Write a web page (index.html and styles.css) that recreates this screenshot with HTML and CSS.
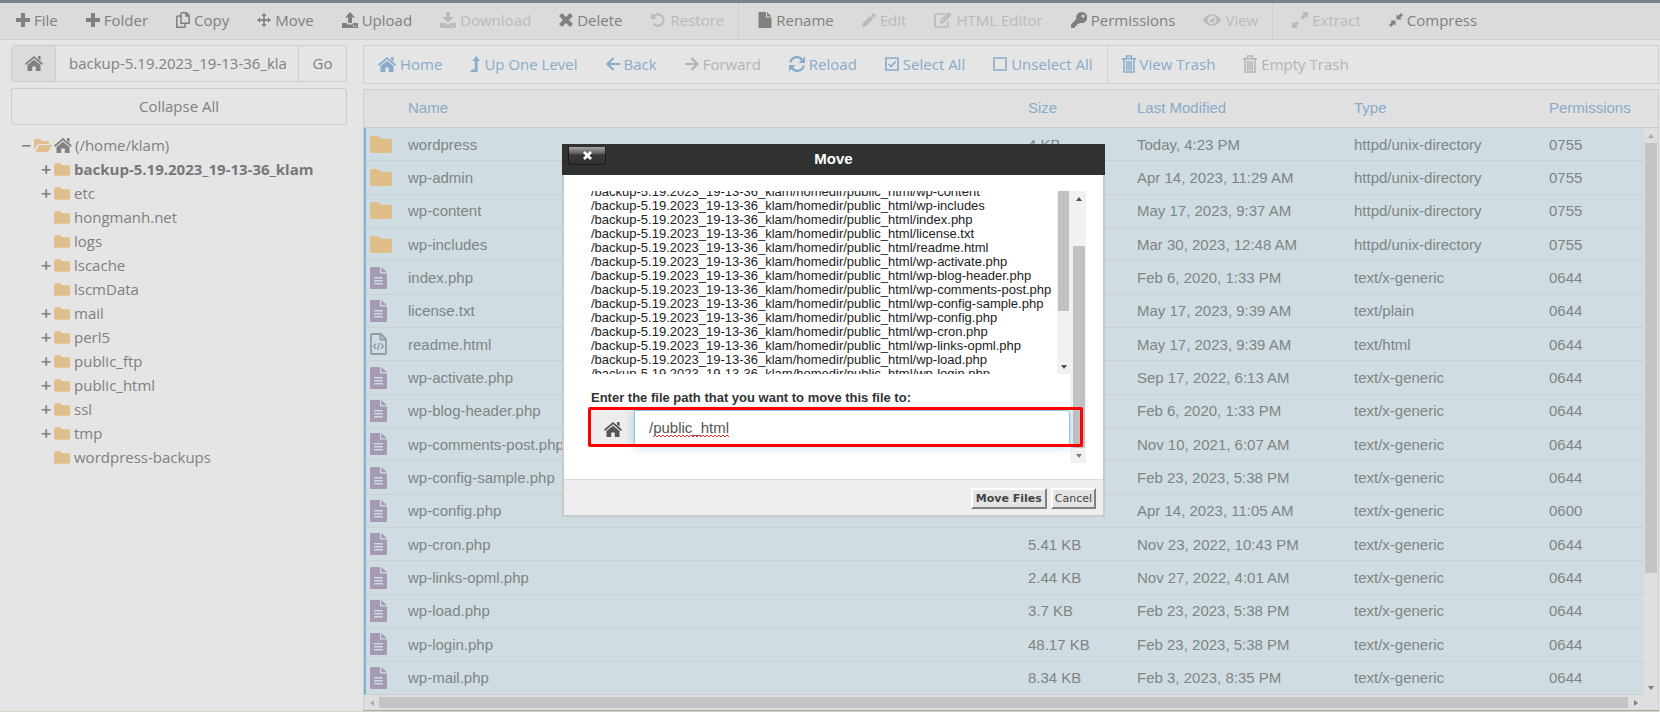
FILE: index.html
```html
<!DOCTYPE html>
<html lang="en">
<head>
    <meta charset="UTF-8">
    <meta name="viewport" content="width=device-width, initial-scale=1.0">
    <title>File Manager</title>
    <link rel="stylesheet" href="styles.css">
</head>
<body>

    <!-- icon set -->
    <svg class="icon-defs" aria-hidden="true">
        <symbol id="i-plus" viewBox="0 0 14 14"><path d="M5 0h4v5h5v4H9v5H5V9H0V5h5z"/></symbol>
        <symbol id="i-copy" viewBox="0 0 14 16"><path fill="none" stroke="currentColor" stroke-width="1.5" d="M6 .8h4.5l2.7 2.7v7.7H5V1.5zM10 1v3h3M5 4H1.5l-.7.7v10.5H9v-4"/></symbol>
        <symbol id="i-move" viewBox="0 0 16 16"><path d="M8 0l3 3.4H9V7h3.6V5L16 8l-3.4 3V9H9v3.6h2L8 16l-3-3.4h2V9H3.4v2L0 8l3.4-3v2H7V3.4H5z"/></symbol>
        <symbol id="i-upload" viewBox="0 0 16 16"><path d="M8 0l5 5.4h-3V11H6V5.400H3zM0 11h5v1.500h6V11h5v5H0z"/><path fill="#dbdbdb" d="M11 13.600h1.200v1.200H11zM13.200 13.600h1.200v1.200h-1.200z"/></symbol>
        <symbol id="i-download" viewBox="0 0 16 16"><path d="M6 0h4v5h3.500L8 10.800 2.500 5H6zM0 11h5l3 2.400L11 11h5v5H0z"/><path fill="#dbdbdb" d="M11 13.600h1.200v1.200H11zM13.200 13.600h1.200v1.200h-1.200z"/></symbol>
        <symbol id="i-times" viewBox="0 0 14 14"><path d="M3 0l4 4 4-4 3 3-4 4 4 4-3 3-4-4-4 4-3-3 4-4-4-4z"/></symbol>
        <symbol id="i-undo" viewBox="0 0 16 16"><path d="M1 1v6h6L4.800 4.800a4.600 4.600 0 1 1-.3 6.300l-1.600 1.400A6.700 6.700 0 1 0 3.200 3.300z"/></symbol>
        <symbol id="i-file" viewBox="0 0 13 16"><path d="M0 0h7.500v5.500H13V16H0zM8.500 0L13 4.500H8.500z"/></symbol>
        <symbol id="i-pencil" viewBox="0 0 16 16"><path d="M0 16l1-4.500 8.500-8.500L13 6.500 4.500 15zM10.300 2.200L12.200.3q.8-.6 1.600 0l1.900 1.900q.6.8 0 1.600l-1.900 1.900z"/></symbol>
        <symbol id="i-edit" viewBox="0 0 18 16"><path fill="none" stroke="currentColor" stroke-width="1.600" d="M11 2H3Q1 2 1 4v9q0 2 2 2h9q2 0 2-2V9.500"/><path d="M6 11.500V8.500L13.500 1l3 3L9 11.500zM14.200.4q.8-.7 1.500 0l1.500 1.500q.6.700 0 1.400l-.4.400-3-2.900z"/><path fill="none" stroke="#dbdbdb" d="M7.500 9.500L13.500 3.500"/></symbol>
        <symbol id="i-key" viewBox="0 0 16 16"><path fill-rule="evenodd" d="M10.500 0A5.500 5.500 0 1 1 9 10.700L7.700 12H6v2H4v2H0v-3.500l5.300-5.400A5.500 5.500 0 0 1 10.500 0zM12 2.500a1.500 1.500 0 1 0 0 3 1.500 1.500 0 0 0 0-3z"/></symbol>
        <symbol id="i-eye" viewBox="0 0 18 16"><path fill-rule="evenodd" d="M0 8q3.500-5.800 9-5.800T18 8q-3.500 5.800-9 5.800T0 8zM9 3.600a4.400 4.400 0 1 0 0 8.800 4.400 4.400 0 0 0 0-8.800zM9 5.400a2.600 2.600 0 1 1-2.600 2.600H8q1 0 1-1z"/></symbol>
        <symbol id="i-expand" viewBox="0 0 16 16"><path d="M10 0h6v6l-1.800-1.800-3.400 3.300-2.300-2.300 3.300-3.400zM0 10l1.800 1.800 2.600-2.600 2.400 2.400-2.600 2.600L6 16H0z"/></symbol>
        <symbol id="i-compress" viewBox="0 0 16 16"><path d="M8.500 1.500l1.800 1.800L13.600 0 16 2.400l-3.300 3.300 1.800 1.800h-6zM1.500 8.500h6v6l-1.800-1.800L2.400 16 0 13.600l3.300-3.300z"/></symbol>
        <symbol id="i-home" viewBox="0 0 18 16"><path d="M9 1l9 7.600-1.100 1.300L9 3.300 1.100 9.900 0 8.600zM13 1h2.500v4.700L13 3.600zM9 4.700l6.500 5.400V16h-4.700v-4.500H7.200V16H2.500v-5.900z"/></symbol>
        <symbol id="i-levelup" viewBox="0 0 10 16"><path d="M6.200 0L10 5H7.600v11H0l2-2.400h2.800V5H2.400z"/></symbol>
        <symbol id="i-left" viewBox="0 0 14 14"><path fill="none" stroke="currentColor" stroke-width="2.200" d="M14 7H2M7.500 1L1.500 7l6 6"/></symbol>
        <symbol id="i-right" viewBox="0 0 14 14"><path fill="none" stroke="currentColor" stroke-width="2.200" d="M0 7h12M6.500 1l6 6-6 6"/></symbol>
        <symbol id="i-reload" viewBox="0 0 16 16"><path fill="none" stroke="currentColor" stroke-width="2.200" d="M1.300 6.500A6.500 6.500 0 0 1 13 4M14.700 9.500A6.500 6.500 0 0 1 3 12"/><path d="M16 .5V7H9.500zM0 15.500V9h6.500z"/></symbol>
        <symbol id="i-check" viewBox="0 0 14 14"><path fill="none" stroke="currentColor" stroke-width="1.600" d="M1 1h12v12H1zM3.500 7l2.500 2.500 4.700-5"/></symbol>
        <symbol id="i-square" viewBox="0 0 14 14"><path fill="none" stroke="currentColor" stroke-width="1.600" d="M1 1h12v12H1z"/></symbol>
        <symbol id="i-trash" viewBox="0 0 14 18"><path fill="none" stroke="currentColor" stroke-width="1.500" d="M0 3.700h14M4.500 3.500V1h5v2.500M2 4v13h10V4M4.800 6v9.500M7 6v9.500M9.200 6v9.500"/></symbol>
        <symbol id="i-folder" viewBox="0 0 22 17"><path d="M1.800 0h6.400L11 2.800h9.200Q22 2.800 22 4.600v10.600Q22 17 20.200 17H1.800Q0 17 0 15.200V1.800Q0 0 1.800 0z"/></symbol>
        <symbol id="i-folder-open" viewBox="0 0 18 13"><path d="M1.500 0h4.500l2 2h5.500Q15 2 15 3.500V5H5.500Q4 5 3 6.300L0 10.800V1.500Q0 0 1.500 0zM5.300 6H18l-3.500 6q-.6 1-1.800 1H1.200z"/></symbol>
        <symbol id="i-filetext" viewBox="0 0 17 22"><path fill-rule="evenodd" d="M1 0h9v6.500h7V21q0 1-1 1H1q-1 0-1-1V1Q0 0 1 0zM11.300 0L17 5.300h-5.700zM4.200 10v1.400h8.600V10zM4.200 13v1.400h8.600V13zM4.200 16v1.400h8.600V16z"/></symbol>
        <symbol id="i-filecode" viewBox="0 0 17 22"><path fill="none" stroke="currentColor" stroke-width="1.800" d="M2 1h9l5 5v14q0 1-1 1H2q-1 0-1-1V2q0-1 1-1zM10.500 1v5.500H16"/><path fill="none" stroke="currentColor" stroke-width="1.400" d="M6 10.500l-2.300 2.800L6 16M11 10.500l2.300 2.800L11 16M9.400 9.800l-1.800 7"/></symbol>
    </svg>

    <div class="toolbar">
        <button><svg class="w14"><use href="#i-plus"/></svg>File</button>
        <button><svg class="w14"><use href="#i-plus"/></svg>Folder</button>
        <button><svg class="w14"><use href="#i-copy"/></svg>Copy</button>
        <button><svg class="w14"><use href="#i-move"/></svg>Move</button>
        <button><svg class="w16"><use href="#i-upload"/></svg>Upload</button>
        <button disabled><svg class="w16"><use href="#i-download"/></svg>Download</button>
        <button><svg class="w14"><use href="#i-times"/></svg>Delete</button>
        <button disabled><svg class="w16"><use href="#i-undo"/></svg>Restore</button>
        <span class="separator"></span>
        <button><svg class="w14"><use href="#i-file"/></svg>Rename</button>
        <button disabled><svg class="w14"><use href="#i-pencil"/></svg>Edit</button>
        <button disabled><svg class="w18"><use href="#i-edit"/></svg>HTML Editor</button>
        <button><svg class="w16"><use href="#i-key"/></svg>Permissions</button>
        <button disabled><svg class="w18"><use href="#i-eye"/></svg>View</button>
        <span class="separator"></span>
        <button disabled><svg class="w16"><use href="#i-expand"/></svg>Extract</button>
        <button><svg class="w14"><use href="#i-compress"/></svg>Compress</button>
    </div>

    <div class="container">
        <div class="sidebar">
            <div class="path-group">
                <button class="path-home" aria-label="Home"><svg class="w18"><use href="#i-home"/></svg></button>
                <input type="text" class="path-input" aria-label="Path" value="backup-5.19.2023_19-13-36_klam">
                <button class="path-go">Go</button>
            </div>
            <button class="collapse-btn">Collapse All</button>

            <ul class="tree">
                <li class="root"><span class="toggle">−</span><svg class="folder-open"><use href="#i-folder-open"/></svg><svg class="w18 home"><use href="#i-home"/></svg>(/home/klam)</li>
                <li class="selected"><span class="toggle">+</span><svg class="folder"><use href="#i-folder"/></svg>backup-5.19.2023_19-13-36_klam</li>
                <li><span class="toggle">+</span><svg class="folder"><use href="#i-folder"/></svg>etc</li>
                <li><span class="toggle"></span><svg class="folder"><use href="#i-folder"/></svg>hongmanh.net</li>
                <li><span class="toggle"></span><svg class="folder"><use href="#i-folder"/></svg>logs</li>
                <li><span class="toggle">+</span><svg class="folder"><use href="#i-folder"/></svg>lscache</li>
                <li><span class="toggle"></span><svg class="folder"><use href="#i-folder"/></svg>lscmData</li>
                <li><span class="toggle">+</span><svg class="folder"><use href="#i-folder"/></svg>mail</li>
                <li><span class="toggle">+</span><svg class="folder"><use href="#i-folder"/></svg>perl5</li>
                <li><span class="toggle">+</span><svg class="folder"><use href="#i-folder"/></svg>public_ftp</li>
                <li><span class="toggle">+</span><svg class="folder"><use href="#i-folder"/></svg>public_html</li>
                <li><span class="toggle">+</span><svg class="folder"><use href="#i-folder"/></svg>ssl</li>
                <li><span class="toggle">+</span><svg class="folder"><use href="#i-folder"/></svg>tmp</li>
                <li><span class="toggle"></span><svg class="folder"><use href="#i-folder"/></svg>wordpress-backups</li>
            </ul>
        </div>

        <div class="content">
            <div class="navbar">
                <button><svg class="w18"><use href="#i-home"/></svg>Home</button>
                <button><svg class="w10"><use href="#i-levelup"/></svg>Up One Level</button>
                <button><svg class="w14"><use href="#i-left"/></svg>Back</button>
                <button disabled><svg class="w14"><use href="#i-right"/></svg>Forward</button>
                <button><svg class="w16"><use href="#i-reload"/></svg>Reload</button>
                <button><svg class="w14"><use href="#i-check"/></svg>Select All</button>
                <button><svg class="w14"><use href="#i-square"/></svg>Unselect All</button>
                <span class="separator"></span>
                <button><svg class="w14 trash"><use href="#i-trash"/></svg>View Trash</button>
                <button disabled><svg class="w14 trash"><use href="#i-trash"/></svg>Empty Trash</button>
            </div>

            <div class="file-panel">
                <div class="column-head">
                    <span class="col-icon"></span>
                    <span class="col-name">Name</span>
                    <span class="col-size">Size</span>
                    <span class="col-date">Last Modified</span>
                    <span class="col-type">Type</span>
                    <span class="col-perm">Permissions</span>
                </div>
                <div class="file-scroll">
                    <table class="files">
                        <colgroup>
                            <col class="col-icon"><col><col class="col-size"><col class="col-date"><col class="col-type"><col class="col-perm">
                        </colgroup>
                        <tbody>
                            <tr><td><svg class="dir"><use href="#i-folder"/></svg></td><td>wordpress</td><td>4 KB</td><td>Today, 4:23 PM</td><td>httpd/unix-directory</td><td>0755</td></tr>
                            <tr><td><svg class="dir"><use href="#i-folder"/></svg></td><td>wp-admin</td><td>4 KB</td><td>Apr 14, 2023, 11:29 AM</td><td>httpd/unix-directory</td><td>0755</td></tr>
                            <tr><td><svg class="dir"><use href="#i-folder"/></svg></td><td>wp-content</td><td>4 KB</td><td>May 17, 2023, 9:37 AM</td><td>httpd/unix-directory</td><td>0755</td></tr>
                            <tr><td><svg class="dir"><use href="#i-folder"/></svg></td><td>wp-includes</td><td>12 KB</td><td>Mar 30, 2023, 12:48 AM</td><td>httpd/unix-directory</td><td>0755</td></tr>
                            <tr><td><svg class="doc"><use href="#i-filetext"/></svg></td><td>index.php</td><td>405 bytes</td><td>Feb 6, 2020, 1:33 PM</td><td>text/x-generic</td><td>0644</td></tr>
                            <tr><td><svg class="doc"><use href="#i-filetext"/></svg></td><td>license.txt</td><td>19.45 KB</td><td>May 17, 2023, 9:39 AM</td><td>text/plain</td><td>0644</td></tr>
                            <tr><td><svg class="doc code"><use href="#i-filecode"/></svg></td><td>readme.html</td><td>7.23 KB</td><td>May 17, 2023, 9:39 AM</td><td>text/html</td><td>0644</td></tr>
                            <tr><td><svg class="doc"><use href="#i-filetext"/></svg></td><td>wp-activate.php</td><td>7.04 KB</td><td>Sep 17, 2022, 6:13 AM</td><td>text/x-generic</td><td>0644</td></tr>
                            <tr><td><svg class="doc"><use href="#i-filetext"/></svg></td><td>wp-blog-header.php</td><td>351 bytes</td><td>Feb 6, 2020, 1:33 PM</td><td>text/x-generic</td><td>0644</td></tr>
                            <tr><td><svg class="doc"><use href="#i-filetext"/></svg></td><td>wp-comments-post.php</td><td>2.28 KB</td><td>Nov 10, 2021, 6:07 AM</td><td>text/x-generic</td><td>0644</td></tr>
                            <tr><td><svg class="doc"><use href="#i-filetext"/></svg></td><td>wp-config-sample.php</td><td>2.94 KB</td><td>Feb 23, 2023, 5:38 PM</td><td>text/x-generic</td><td>0644</td></tr>
                            <tr><td><svg class="doc"><use href="#i-filetext"/></svg></td><td>wp-config.php</td><td>3.2 KB</td><td>Apr 14, 2023, 11:05 AM</td><td>text/x-generic</td><td>0600</td></tr>
                            <tr><td><svg class="doc"><use href="#i-filetext"/></svg></td><td>wp-cron.php</td><td>5.41 KB</td><td>Nov 23, 2022, 10:43 PM</td><td>text/x-generic</td><td>0644</td></tr>
                            <tr><td><svg class="doc"><use href="#i-filetext"/></svg></td><td>wp-links-opml.php</td><td>2.44 KB</td><td>Nov 27, 2022, 4:01 AM</td><td>text/x-generic</td><td>0644</td></tr>
                            <tr><td><svg class="doc"><use href="#i-filetext"/></svg></td><td>wp-load.php</td><td>3.7 KB</td><td>Feb 23, 2023, 5:38 PM</td><td>text/x-generic</td><td>0644</td></tr>
                            <tr><td><svg class="doc"><use href="#i-filetext"/></svg></td><td>wp-login.php</td><td>48.17 KB</td><td>Feb 23, 2023, 5:38 PM</td><td>text/x-generic</td><td>0644</td></tr>
                            <tr><td><svg class="doc"><use href="#i-filetext"/></svg></td><td>wp-mail.php</td><td>8.34 KB</td><td>Feb 3, 2023, 8:35 PM</td><td>text/x-generic</td><td>0644</td></tr>
                        </tbody>
                    </table>
                    <div class="scrollbar">
                        <span class="arrow up light"></span>
                        <span class="thumb"></span>
                        <span class="track"></span>
                        <span class="arrow down"></span>
                    </div>
                </div>
                <div class="scrollbar horizontal">
                    <span class="arrow left light"></span>
                    <span class="thumb"></span>
                    <span class="arrow right"></span>
                </div>
            </div>
        </div>
    </div>

    <div class="modal" role="dialog" aria-labelledby="modal-title">
        <div class="modal-header">
            <button class="close-btn" aria-label="Close"><svg><use href="#i-times"/></svg></button>
            <h2 id="modal-title">Move</h2>
        </div>
        <div class="modal-body">
            <div class="modal-main">
                <div class="paths-wrap">
                    <ul class="paths">
                        <li>/backup-5.19.2023_19-13-36_klam/homedir/public_html/wp-content</li>
                        <li>/backup-5.19.2023_19-13-36_klam/homedir/public_html/wp-includes</li>
                        <li>/backup-5.19.2023_19-13-36_klam/homedir/public_html/index.php</li>
                        <li>/backup-5.19.2023_19-13-36_klam/homedir/public_html/license.txt</li>
                        <li>/backup-5.19.2023_19-13-36_klam/homedir/public_html/readme.html</li>
                        <li>/backup-5.19.2023_19-13-36_klam/homedir/public_html/wp-activate.php</li>
                        <li>/backup-5.19.2023_19-13-36_klam/homedir/public_html/wp-blog-header.php</li>
                        <li>/backup-5.19.2023_19-13-36_klam/homedir/public_html/wp-comments-post.php</li>
                        <li>/backup-5.19.2023_19-13-36_klam/homedir/public_html/wp-config-sample.php</li>
                        <li>/backup-5.19.2023_19-13-36_klam/homedir/public_html/wp-config.php</li>
                        <li>/backup-5.19.2023_19-13-36_klam/homedir/public_html/wp-cron.php</li>
                        <li>/backup-5.19.2023_19-13-36_klam/homedir/public_html/wp-links-opml.php</li>
                        <li>/backup-5.19.2023_19-13-36_klam/homedir/public_html/wp-load.php</li>
                        <li>/backup-5.19.2023_19-13-36_klam/homedir/public_html/wp-login.php</li>
                    </ul>
                    <div class="scrollbar inner">
                        <span class="thumb"></span>
                        <span class="track"></span>
                        <span class="arrow down dark"></span>
                    </div>
                </div>
                <label for="destination">Enter the file path that you want to move this file to:</label>
                <div class="destination">
                    <span class="addon"><svg class="w18"><use href="#i-home"/></svg></span>
                    <input type="text" id="destination" value="/public_html">
                    <svg class="squiggle" viewBox="0 0 76 4" aria-hidden="true"><path d="M0 3l2-2 2 2 2-2 2 2 2-2 2 2 2-2 2 2 2-2 2 2 2-2 2 2 2-2 2 2 2-2 2 2 2-2 2 2 2-2 2 2 2-2 2 2 2-2 2 2 2-2 2 2 2-2 2 2 2-2 2 2 2-2 2 2 2-2 2 2 2-2 2 2 2-2 2 2"/></svg>
                </div>
            </div>
            <div class="scrollbar outer">
                <span class="arrow up dark"></span>
                <span class="track"></span>
                <span class="thumb"></span>
                <span class="arrow down"></span>
            </div>
            <div class="highlight"></div>
        </div>
        <div class="modal-footer">
            <button class="move-btn">Move Files</button>
            <button>Cancel</button>
        </div>
    </div>

</body>
</html>
```
FILE: styles.css
```css
* {
    margin: 0;
    padding: 0;
    box-sizing: border-box;
}

body {
    height: 100vh;
    display: flex;
    flex-direction: column;
    background-color: #e5e5e5;
    border-top: 3px solid #77858b;
    border-bottom: 1px solid #ddd3c4;
    color: #808080;
    font-family: "Open Sans", sans-serif;
    font-size: 15px;
    overflow: hidden;
}

button,
input {
    font: inherit;
    color: inherit;
    background: none;
    border: none;
}

ul {
    list-style: none;
}

svg {
    display: block;
    flex: none;
    height: 16px;
    fill: currentColor;
}

.icon-defs {
    position: absolute;
    width: 0;
    height: 0;
}

.w10 { width: 10px; }
.w14 { width: 14px; }
.w16 { width: 16px; }
.w18 { width: 18px; }
.trash { height: 18px; }

/* toolbars */
.toolbar,
.navbar {
    display: flex;
    flex: none;
    height: 37px;
}

.toolbar {
    padding-left: 2px;
    background-color: #dbdbdb;
    border-bottom: 1px solid #cdcdcd;
}

.toolbar button,
.navbar button {
    display: flex;
    align-items: center;
    gap: 4px;
    padding: 0 14px 2px;
    white-space: nowrap;
}

.toolbar button:disabled {
    color: #bababa;
}

.separator {
    border-left: 1px dotted #c4c4c4;
}

.toolbar .separator {
    margin-right: 5px;
}

.navbar {
    height: 39px;
    border: 1px solid #cfcfcf;
    color: #88abca;
}

.navbar button:disabled {
    color: #b3b3b3;
}

.container {
    flex: 1;
    min-height: 0;
    display: flex;
    gap: 16px;
    padding: 5px 1px 0 11px;
}

/* sidebar */
.sidebar {
    flex: none;
    width: 336px;
}

.path-group {
    display: flex;
    height: 37px;
    margin-bottom: 6px;
    border: 1px solid #cbcbcb;
    border-radius: 3px;
}

.path-home {
    display: flex;
    align-items: center;
    justify-content: center;
    width: 44px;
    padding-bottom: 2px;
    background-color: #dbdbdb;
    border-right: 1px solid #cbcbcb;
}

.path-input {
    flex: 1;
    min-width: 0;
    padding: 0 12px 2px 13px;
}

.path-go {
    width: 48px;
    padding-bottom: 2px;
    border-left: 1px solid #cbcbcb;
}

.collapse-btn {
    width: 100%;
    height: 37px;
    padding-bottom: 2px;
    border: 1px solid #cbcbcb;
    border-radius: 3px;
}

.tree {
    padding: 8px 0 0 30px;
}

.tree li {
    display: flex;
    align-items: center;
    height: 24px;
    line-height: 24px;
    white-space: nowrap;
}

.tree .root {
    margin-left: -20px;
}

.tree .selected {
    font-weight: bold;
    color: #777777;
}

.tree .toggle {
    width: 13px;
    font-weight: 600;
    font-size: 18px;
}

.tree .folder {
    width: 16px;
    height: 13px;
    margin-right: 4px;
    color: #dfc08c;
}

.tree .folder-open {
    width: 18px;
    height: 13px;
    margin-right: 2px;
    color: #dfc08c;
}

.tree .home {
    margin-right: 3px;
}

/* file list */
.content {
    flex: 1;
    min-width: 0;
    display: flex;
    flex-direction: column;
    gap: 5px;
}

.file-panel {
    flex: 1;
    min-height: 0;
    display: flex;
    flex-direction: column;
    border: 1px solid #cfcfcf;
    border-bottom-color: #a8a8a4;
    font-family: "Liberation Sans", Arial, sans-serif;
}

.column-head {
    flex: none;
    display: flex;
    align-items: center;
    height: 38px;
    padding: 0 14px 2px 0;
    background-color: #e0e0e0;
    border-bottom: 1px solid #cbcbcb;
    color: #88abca;
}

.col-icon { width: 44px; }
.col-name { flex: 1; }
.col-size { width: 109px; }
.col-date { width: 217px; }
.col-type { width: 195px; }
.col-perm { width: 95px; }

.file-scroll {
    flex: 1;
    min-height: 0;
    display: flex;
}

.files {
    flex: 1;
    height: 100%;
    table-layout: fixed;
    border-collapse: separate;
    border-spacing: 0;
    background-color: #cfdde2;
    color: #7f8484;
}

.files td {
    height: 30px;
    border-bottom: 1px solid #cccfd6;
    vertical-align: middle;
    white-space: nowrap;
}

.files td:first-child {
    padding-left: 4px;
    border-left: 2px solid #7cb4cf;
}

.files .dir {
    width: 22px;
    height: 17px;
    color: #dfbf88;
}

.files .doc {
    width: 17px;
    height: 22px;
    color: #a699b4;
}

.files .code {
    color: #919ca6;
}

/* scrollbars */
.scrollbar {
    flex: none;
    display: flex;
    flex-direction: column;
    width: 14px;
    padding: 0 1px;
    background-color: #dedede;
}

.scrollbar .arrow {
    flex: none;
    height: 15px;
    display: flex;
    align-items: center;
    justify-content: center;
    color: #7f7f7f;
}

.scrollbar .arrow::before {
    content: "";
    border: 3px solid transparent;
    border-bottom: 4px solid currentColor;
    border-top: 0;
}

.scrollbar .down::before {
    transform: rotate(180deg);
}

.scrollbar .left::before {
    transform: rotate(-90deg);
}

.scrollbar .right::before {
    transform: rotate(90deg);
}

.scrollbar .light {
    color: #ababab;
}

.scrollbar .dark {
    color: #505050;
}

.scrollbar .thumb {
    flex: 4;
    background-color: #c4c4c4;
}

.scrollbar .track {
    flex: 1;
}

.horizontal {
    flex-direction: row;
    width: auto;
    height: 15px;
    padding: 2px 15px 2px 0;
}

.horizontal .arrow {
    width: 15px;
    height: auto;
}

/* move dialog */
.modal {
    position: absolute;
    top: 144px;
    left: 562px;
    width: 543px;
    border: 2px solid #c6cccc;
    border-top: 0;
    background-color: #ffffff;
    color: #222222;
    font-family: "Liberation Sans", Arial, sans-serif;
    font-size: 13px;
}

.modal-header {
    position: relative;
    height: 31px;
    margin: 0 -2px;
    background-color: #303232;
    color: #ffffff;
}

.modal-header h2 {
    font-size: 15px;
    line-height: 30px;
    text-align: center;
}

.close-btn {
    position: absolute;
    top: 3px;
    left: 6px;
    width: 38px;
    height: 18px;
    display: flex;
    align-items: center;
    justify-content: center;
    padding-bottom: 1px;
    background-image: linear-gradient(#a6a6a6, #5a5a5a 40%, #3a3a3a 45%, #303030);
    border: 1px solid #1c1c1c;
    border-top: 0;
    border-radius: 0 0 4px 4px;
}

.close-btn svg {
    width: 9px;
    height: 9px;
}

.modal-body {
    position: relative;
    display: flex;
    height: 304px;
    padding: 16px 17px 16px 27px;
}

.modal-main {
    flex: 1;
    min-width: 0;
}

.paths-wrap {
    display: flex;
    height: 183px;
    overflow: hidden;
}

.paths {
    flex: 1;
    align-self: center;
    line-height: 14px;
    white-space: nowrap;
}

.modal .scrollbar {
    background-color: #f1f1f1;
}

.modal .scrollbar .thumb {
    background-color: #c1c1c1;
}

.scrollbar.inner {
    width: 13px;
    padding-right: 1px;
}

.inner .thumb {
    flex: 5;
}

.inner .track {
    flex: 2;
}

.scrollbar.outer {
    width: 16px;
    padding: 0 1px 0 3px;
}

.outer .track {
    flex: 1;
}

.outer .thumb {
    flex: 5;
}

.modal label {
    display: block;
    margin-top: 15px;
    line-height: 18px;
    font-weight: bold;
    color: #333333;
}

.destination {
    position: relative;
    display: flex;
    height: 37px;
    margin-top: 3px;
    color: #555555;
    font-size: 15px;
}

.addon {
    display: flex;
    align-items: center;
    justify-content: center;
    width: 43px;
    background-color: #ededed;
}

.destination input {
    flex: 1;
    min-width: 0;
    padding: 0 14px 2px;
    background-color: #ffffff;
    border: 1px solid #8fc0ea;
    border-radius: 0 3px 3px 0;
    box-shadow: 0 0 8px rgba(102, 175, 233, 0.5);
}

.squiggle {
    position: absolute;
    left: 62px;
    bottom: 9px;
    width: 76px;
    height: 4px;
    fill: none;
    stroke: #e03030;
}

.highlight {
    position: absolute;
    top: 232px;
    left: 24px;
    right: 20px;
    height: 40px;
    border: 3px solid #fe0000;
    border-radius: 2px;
}

.modal-footer {
    display: flex;
    justify-content: flex-end;
    gap: 4px;
    height: 36px;
    padding: 8px 7px 6px 0;
    background-color: #eeeef0;
    border-top: 1px solid #dddddd;
}

.modal-footer button {
    padding: 0 2px;
    background-color: #e4e4e4;
    border: 2px solid;
    border-color: #ffffff #808080 #808080 #ffffff;
    color: #444444;
    font-family: "DejaVu Sans", sans-serif;
    font-size: 11px;
}

.modal-footer .move-btn {
    padding: 0 3px;
    font-weight: bold;
}
```
